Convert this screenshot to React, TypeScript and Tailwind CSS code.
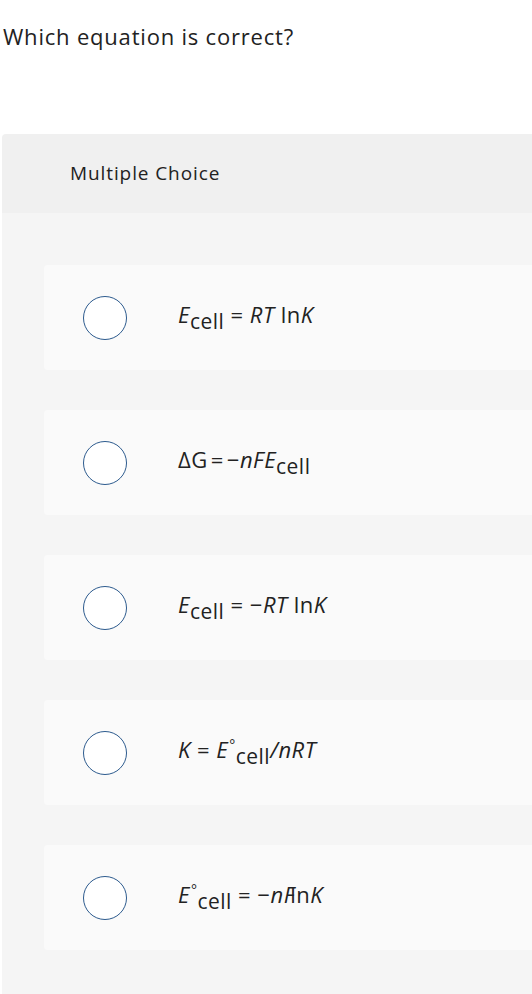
import React from "react";

const font = { fontFamily: "'Open Sans', Lato, sans-serif" };

function Sub({ children }: { children: React.ReactNode }) {
  return <span className="not-italic text-[21px] align-[-6px] tracking-[0.5px]">{children}</span>;
}

function I({ children }: { children: React.ReactNode }) {
  return <span className="italic">{children}</span>;
}

function Deg() {
  return <span className="text-[14px] align-[8px] ml-[1px]">°</span>;
}

const options: React.ReactNode[] = [
  <>
    <I>E</I>
    <Sub>cell</Sub> = <I>RT</I> ln<I>K</I>
  </>,
  <>
    ΔG<span className="mx-[3px]">=</span>−<I>nFE</I>
    <Sub>cell</Sub>
  </>,
  <>
    <I>E</I>
    <Sub>cell</Sub> = −<I>RT</I> ln<I>K</I>
  </>,
  <>
    <I>K</I> = <I>E</I>
    <Deg />
    <Sub>cell</Sub>
    <I>/nRT</I>
  </>,
  <>
    <I>E</I>
    <Deg />
    <Sub>cell</Sub> = −<I>n</I>
    <span className="italic tracking-[-4px]">F</span>
    <span>ln</span>
    <I>K</I>
  </>,
];

export default function App() {
  return (
    <div className="bg-white h-[994px] overflow-hidden text-[#222]" style={font}>
      <h1 className="pl-[3px] pt-[20px] text-[22px] tracking-[0.8px] leading-[32px] font-normal">
        Which equation is correct?
      </h1>
      <div className="mt-[82px] ml-[2px] rounded-tl-[4px] overflow-hidden">
        <div className="bg-[#f0f0f0] h-[79px] flex items-center pl-[68px] text-[19px] tracking-[0.9px]">
          Multiple Choice
        </div>
        <div className="bg-[#f5f5f5] pt-[52px] pl-[42px] flex flex-col gap-[40px] pb-[60px]">
          {options.map((o, i) => (
            <div
              key={i}
              className="bg-[#fafafa] rounded-l-[4px] h-[105px] flex items-center pl-[39px] gap-[51px]"
            >
              <span className="w-[44px] h-[44px] rounded-full border border-[#2d5b8e] bg-white shrink-0" />
              <div className="text-[22px] tracking-[0.5px] whitespace-pre">{o}</div>
            </div>
          ))}
        </div>
      </div>
    </div>
  );
}
